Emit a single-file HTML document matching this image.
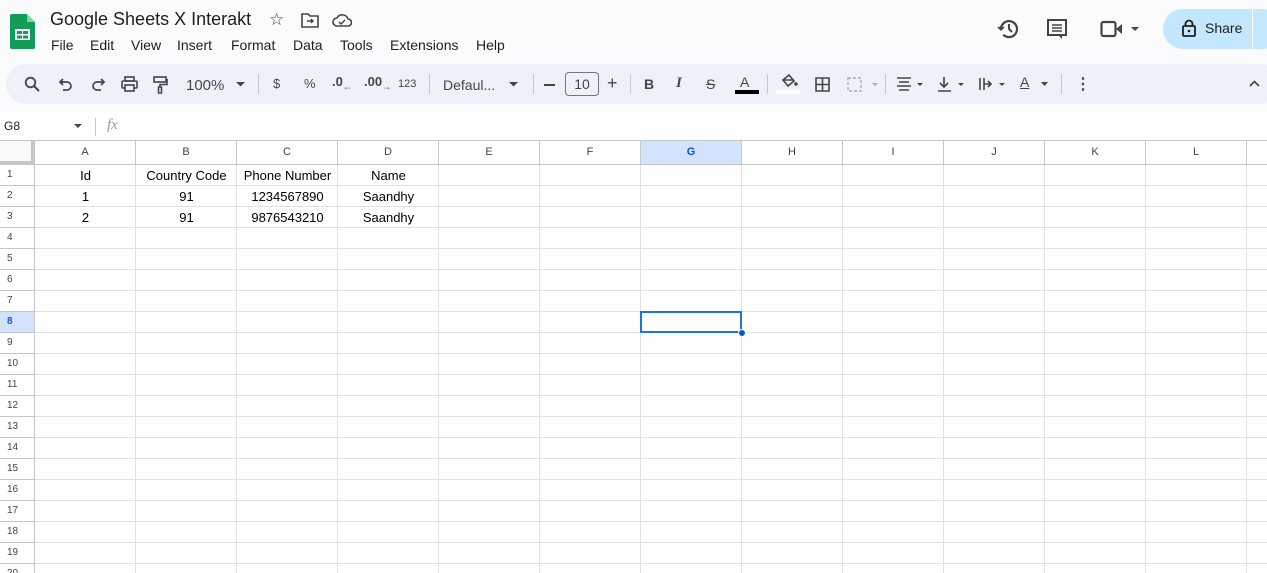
<!DOCTYPE html>
<html><head><meta charset="utf-8"><style>
*{margin:0;padding:0;box-sizing:border-box}
html,body{width:1267px;height:573px;overflow:hidden}
body{background:#f9fbfd;font-family:"Liberation Sans",Arial,sans-serif;position:relative;color:#1f1f1f}
.a{position:absolute}
.m{position:absolute;top:37px;font-size:14px;color:#1f1f1f}
.tb{position:absolute;top:64px;left:6px;width:1275px;height:40px;background:#edf2fa;border-radius:20px}
.ic{position:absolute;font-size:14px;color:#444746}
.sep{position:absolute;top:74px;width:1px;height:20px;background:#c7c7c7}
.grid{position:absolute;left:35px;top:165px;width:1232px;height:408px;background-color:#fff;
background-image:linear-gradient(to right,#e1e1e1 1px,transparent 1px),linear-gradient(to bottom,#e1e1e1 1px,transparent 1px);
background-size:101px 21px;background-position:100px 20px}
.colh{position:absolute;top:141px;height:24px;background:#fff;border-bottom:1px solid #c4c7c5;border-right:1px solid #c4c7c5;font-size:11px;text-align:center;line-height:23px;color:#444}
.rowh{position:absolute;left:0;width:35px;height:21px;background:#fff;border-bottom:1px solid #c4c7c5;border-right:1px solid #c4c7c5;font-size:10px;line-height:20px;padding-left:7px;color:#444}
.c{position:absolute;width:101px;text-align:center;font-size:13px;line-height:21px;color:#000}
</style></head><body>
<svg class="a" style="left:10px;top:14px" width="25" height="35" viewBox="0 0 25 35"><path d="M2 0h15l8 8v25a2 2 0 0 1-2 2H2a2 2 0 0 1-2-2V2a2 2 0 0 1 2-2z" fill="#0f9d58"/><path d="M17 0v8h8z" fill="#87ceac"/><rect x="5" y="15" width="15" height="11" fill="#fff"/><rect x="7" y="17" width="5" height="3" fill="#0f9d58"/><rect x="13" y="17" width="5" height="3" fill="#0f9d58"/><rect x="7" y="21.5" width="5" height="3" fill="#0f9d58"/><rect x="13" y="21.5" width="5" height="3" fill="#0f9d58"/></svg>
<div class="a" style="left:50px;top:9px;font-size:18px;color:#1f1f1f">Google Sheets X Interakt</div>
<div class="a" style="left:269px;top:10px;font-size:17px;color:#444">☆</div>
<svg class="a" style="left:301px;top:13px" width="18" height="15" viewBox="0 0 18 15"><path d="M1 1h6l2 2h8v11H1z" fill="none" stroke="#444" stroke-width="1.6"/><path d="M6 8h6M10 6l2 2-2 2" stroke="#444" stroke-width="1.4" fill="none"/></svg>
<svg class="a" style="left:332px;top:13px" width="20" height="14" viewBox="0 0 20 14"><path d="M5 13a4 4 0 0 1 0-8 6 6 0 0 1 11 1 3.5 3.5 0 0 1 0 7z" fill="none" stroke="#444" stroke-width="1.6"/><path d="M7 9l2 2 4-4" stroke="#444" stroke-width="1.5" fill="none"/></svg>
<div class="m" style="left:51px">File</div>
<div class="m" style="left:90px">Edit</div>
<div class="m" style="left:131px">View</div>
<div class="m" style="left:177px">Insert</div>
<div class="m" style="left:231px">Format</div>
<div class="m" style="left:293px">Data</div>
<div class="m" style="left:340px">Tools</div>
<div class="m" style="left:390px">Extensions</div>
<div class="m" style="left:476px">Help</div>
<svg class="a" style="left:997px;top:18px" width="22" height="22" viewBox="0 0 22 22"><path d="M4 11a8 8 0 1 1 2.3 5.7" fill="none" stroke="#444" stroke-width="2.2"/><path d="M1 9l3 3 3-3" fill="#444" stroke="#444" stroke-width="1.5"/><path d="M12 6v5l3 3" stroke="#444" stroke-width="2" fill="none"/></svg>
<svg class="a" style="left:1046px;top:18px" width="22" height="22" viewBox="0 0 22 22"><path d="M2 2h18v15H2z" fill="none" stroke="#444" stroke-width="2"/><path d="M16 17v4l-4-4" fill="#444"/><path d="M6 7h10M6 10h10M6 13h10" stroke="#444" stroke-width="1.6"/></svg>
<svg class="a" style="left:1100px;top:20px" width="44" height="18" viewBox="0 0 44 18"><rect x="1.5" y="2" width="14" height="14" rx="2" fill="none" stroke="#444" stroke-width="2.2"/><path d="M16 9l6-5v10z" fill="#444"/><path d="M31 7h8l-4 4z" fill="#444"/></svg>
<div class="a" style="left:1163px;top:9px;width:120px;height:40px;background:#c2e7ff;border-radius:20px"></div>
<div class="a" style="left:1252px;top:9px;width:1px;height:40px;background:#fff"></div>
<svg class="a" style="left:1182px;top:19px" width="14" height="18" viewBox="0 0 14 18"><path d="M3.5 7V5a3.5 3.5 0 0 1 7 0v2" fill="none" stroke="#1f1f1f" stroke-width="1.8"/><rect x="1" y="7" width="12" height="10" rx="1" fill="none" stroke="#1f1f1f" stroke-width="1.8"/><circle cx="7" cy="12" r="1.3" fill="#1f1f1f"/></svg>
<div class="a" style="left:1205px;top:20px;font-size:14px;color:#1f1f1f">Share</div>
<div class="tb"></div>
<svg class="a" style="left:24px;top:76px" width="16" height="16" viewBox="0 0 16 16"><circle cx="6.5" cy="6.5" r="4.8" fill="none" stroke="#444" stroke-width="1.8"/><path d="M10 10l5 5" stroke="#444" stroke-width="2"/></svg>
<svg class="a" style="left:59px;top:78px" width="14" height="13" viewBox="0 0 14 13"><path d="M4 1L1 4l3 3M1 4h7a4 4 0 0 1 0 8H4" fill="none" stroke="#444" stroke-width="1.7"/></svg>
<svg class="a" style="left:91px;top:78px" width="14" height="13" viewBox="0 0 14 13"><path d="M10 1l3 3-3 3M13 4H6a4 4 0 0 0 0 8h4" fill="none" stroke="#444" stroke-width="1.7"/></svg>
<svg class="a" style="left:121px;top:76px" width="17" height="16" viewBox="0 0 17 16"><rect x="4" y="1" width="9" height="4" fill="none" stroke="#444" stroke-width="1.6"/><rect x="1" y="5" width="15" height="7" rx="1" fill="none" stroke="#444" stroke-width="1.6"/><rect x="4" y="9" width="9" height="6" fill="#edf2fa" stroke="#444" stroke-width="1.6"/></svg>
<svg class="a" style="left:153px;top:76px" width="15" height="18" viewBox="0 0 15 18"><rect x="1" y="1" width="12" height="5" fill="none" stroke="#444" stroke-width="1.6"/><path d="M13 3.5h1v5H7v3" fill="none" stroke="#444" stroke-width="1.6"/><rect x="5.5" y="11" width="3" height="6" fill="none" stroke="#444" stroke-width="1.5"/></svg>
<div class="ic" style="left:186px;top:77px;font-size:15px">100%</div>
<svg class="a" style="left:236px;top:82px" width="10" height="5" viewBox="0 0 10 5"><path d="M0 0h9l-4.5 4.5z" fill="#444"/></svg>
<div class="sep" style="left:258px"></div>
<div class="ic" style="left:273px;top:76px;font-size:13px">$</div>
<div class="ic" style="left:304px;top:76px;font-size:13px">%</div>
<div class="ic" style="left:332px;top:74px;font-size:13px;font-weight:bold">.0<sub style="font-size:9px">←</sub></div>
<div class="ic" style="left:364px;top:74px;font-size:13px;font-weight:bold">.00<sub style="font-size:9px">→</sub></div>
<div class="ic" style="left:398px;top:78px;font-size:11px">123</div>
<div class="sep" style="left:429px"></div>
<div class="ic" style="left:443px;top:77px;font-size:14px">Defaul...</div>
<svg class="a" style="left:509px;top:82px" width="10" height="5" viewBox="0 0 10 5"><path d="M0 0h9l-4.5 4.5z" fill="#444"/></svg>
<div class="sep" style="left:533px"></div>
<div class="a" style="left:544px;top:84px;width:11px;height:1.6px;background:#444"></div>
<div class="a" style="left:565px;top:72px;width:34px;height:24px;border:1px solid #747775;border-radius:4px;font-size:14px;text-align:center;line-height:22px;color:#444">10</div>
<div class="ic" style="left:607px;top:73px;font-size:18px">+</div>
<div class="sep" style="left:630px"></div>
<div class="ic" style="left:644px;top:76px;font-size:14px;font-weight:bold">B</div>
<div class="ic" style="left:676px;top:75px;font-size:15px;font-style:italic;font-family:'Liberation Serif',serif;font-weight:bold">I</div>
<div class="ic" style="left:706px;top:76px;font-size:14px;text-decoration:line-through">S</div>
<div class="ic" style="left:740px;top:74px;font-size:14px">A</div>
<div class="a" style="left:735px;top:90px;width:24px;height:4px;background:#000"></div>
<div class="sep" style="left:767px"></div>
<svg class="a" style="left:779px;top:74px" width="20" height="14" viewBox="0 0 20 14"><path d="M4 6l6-5 5 6-6 5z" fill="none" stroke="#444" stroke-width="1.6"/><path d="M4 6h11" stroke="#444" stroke-width="1.5"/><circle cx="17" cy="10" r="1.8" fill="#444"/></svg>
<div class="a" style="left:776px;top:90px;width:24px;height:4px;background:#fff"></div>
<svg class="a" style="left:815px;top:77px" width="15" height="15" viewBox="0 0 15 15"><path d="M1 1h13v13H1zM7.5 1v13M1 7.5h13" fill="none" stroke="#444" stroke-width="1.6"/></svg>
<svg class="a" style="left:847px;top:77px" width="32" height="15" viewBox="0 0 32 15"><path d="M1 1h13v13H1z" fill="none" stroke="#aaa" stroke-width="1.4" stroke-dasharray="3 2"/><path d="M25 6h6l-3 3z" fill="#aaa"/></svg>
<div class="sep" style="left:885px"></div>
<svg class="a" style="left:896px;top:77px" width="32" height="15" viewBox="0 0 32 15"><path d="M1 1h14M3 5h10M1 9h14M3 13h10" stroke="#444" stroke-width="1.6"/><path d="M21 6h6l-3 3z" fill="#444"/></svg>
<svg class="a" style="left:937px;top:76px" width="32" height="16" viewBox="0 0 32 16"><path d="M7 1v10M3 7l4 4 4-4M1 15h13" stroke="#444" stroke-width="1.6" fill="none"/><path d="M21 7h6l-3 3z" fill="#444"/></svg>
<svg class="a" style="left:978px;top:76px" width="32" height="16" viewBox="0 0 32 16"><path d="M2 2v12M6 2v12M6 8h7M10 5l3 3-3 3" stroke="#444" stroke-width="1.6" fill="none"/><path d="M21 7h6l-3 3z" fill="#444"/></svg>
<div class="ic" style="left:1020px;top:74px;font-size:14px;text-decoration:underline">A</div>
<svg class="a" style="left:1040px;top:82px" width="10" height="5" viewBox="0 0 10 5"><path d="M1 0h7l-3.5 4z" fill="#444"/></svg>
<div class="sep" style="left:1061px"></div>
<div class="ic" style="left:1075px;top:74px;font-size:16px;font-weight:bold">⋮</div>
<svg class="a" style="left:1249px;top:80px" width="11" height="7" viewBox="0 0 11 7"><path d="M1 6l4.5-4.5L10 6" fill="none" stroke="#444" stroke-width="1.6"/></svg>
<div class="a" style="left:0;top:112px;width:1267px;height:29px;background:#fff;border-bottom:1px solid #c4c7c5"></div>
<div class="a" style="left:4px;top:119px;font-size:12px;color:#1f1f1f">G8</div>
<svg class="a" style="left:74px;top:124px" width="9" height="5" viewBox="0 0 9 5"><path d="M0 0h8l-4 4z" fill="#444"/></svg>
<div class="a" style="left:95px;top:118px;width:1px;height:18px;background:#c7c7c7"></div>
<div class="a" style="left:107px;top:117px;font-size:15px;color:#999;font-style:italic;font-family:'Liberation Serif',serif">fx</div>
<div class="grid"></div>
<div class="a" style="left:0;top:141px;width:35px;height:24px;background:#f8f9fa;border-right:4px solid #c4c7c5;border-bottom:4px solid #c4c7c5"></div>
<div class="colh" style="left:35px;width:101px">A</div>
<div class="colh" style="left:136px;width:101px">B</div>
<div class="colh" style="left:237px;width:101px">C</div>
<div class="colh" style="left:338px;width:101px">D</div>
<div class="colh" style="left:439px;width:101px">E</div>
<div class="colh" style="left:540px;width:101px">F</div>
<div class="colh" style="left:641px;width:101px;background:#d3e3fd;color:#0b57d0;font-weight:bold">G</div>
<div class="colh" style="left:742px;width:101px">H</div>
<div class="colh" style="left:843px;width:101px">I</div>
<div class="colh" style="left:944px;width:101px">J</div>
<div class="colh" style="left:1045px;width:101px">K</div>
<div class="colh" style="left:1146px;width:101px">L</div>
<div class="colh" style="left:1247px;width:30px"></div>
<div class="rowh" style="top:165px">1</div>
<div class="rowh" style="top:186px">2</div>
<div class="rowh" style="top:207px">3</div>
<div class="rowh" style="top:228px">4</div>
<div class="rowh" style="top:249px">5</div>
<div class="rowh" style="top:270px">6</div>
<div class="rowh" style="top:291px">7</div>
<div class="rowh" style="top:312px;background:#d3e3fd;color:#0b57d0;font-weight:bold">8</div>
<div class="rowh" style="top:333px">9</div>
<div class="rowh" style="top:354px">10</div>
<div class="rowh" style="top:375px">11</div>
<div class="rowh" style="top:396px">12</div>
<div class="rowh" style="top:417px">13</div>
<div class="rowh" style="top:438px">14</div>
<div class="rowh" style="top:459px">15</div>
<div class="rowh" style="top:480px">16</div>
<div class="rowh" style="top:501px">17</div>
<div class="rowh" style="top:522px">18</div>
<div class="rowh" style="top:543px">19</div>
<div class="rowh" style="top:564px">20</div>
<div class="c" style="left:35px;top:165px">Id</div>
<div class="c" style="left:136px;top:165px">Country Code</div>
<div class="c" style="left:237px;top:165px">Phone Number</div>
<div class="c" style="left:338px;top:165px">Name</div>
<div class="c" style="left:35px;top:186px">1</div>
<div class="c" style="left:136px;top:186px">91</div>
<div class="c" style="left:237px;top:186px">1234567890</div>
<div class="c" style="left:338px;top:186px">Saandhy</div>
<div class="c" style="left:35px;top:207px">2</div>
<div class="c" style="left:136px;top:207px">91</div>
<div class="c" style="left:237px;top:207px">9876543210</div>
<div class="c" style="left:338px;top:207px">Saandhy</div>
<div class="a" style="left:640px;top:311px;width:102px;height:22px;border:2px solid #1a73e8"></div>
<div class="a" style="left:738px;top:329px;width:8px;height:8px;border-radius:50%;background:#0b57d0;border:1px solid #fff"></div>
</body></html>
